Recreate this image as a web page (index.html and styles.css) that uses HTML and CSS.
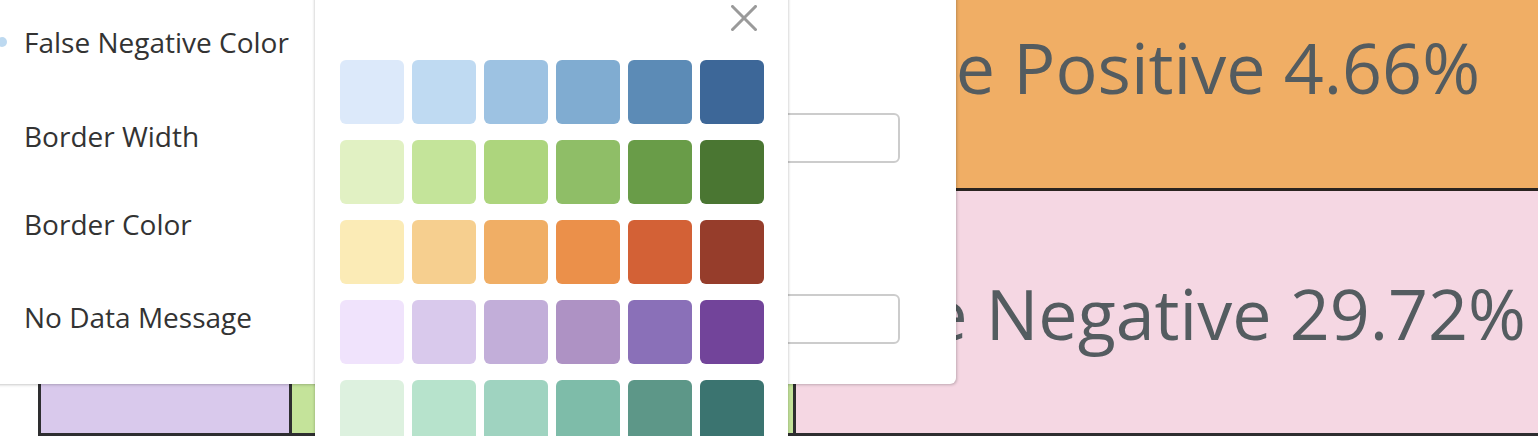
FILE: index.html
```html
<!DOCTYPE html>
<html lang="en">
<head>
<meta charset="utf-8">
<title>Chart settings</title>
<link rel="stylesheet" href="styles.css">
</head>
<body>
<div class="stage">
  <div class="chart">
    <div class="cell cell-purple"></div>
    <div class="cell cell-green"></div>
    <div class="cell cell-orange"><span class="cell-label">False Positive 4.66%</span></div>
    <div class="cell cell-pink"><span class="cell-label">False Negative 29.72%</span></div>
  </div>

  <div class="panel">
    <div class="row row-1">
      <span class="dot"></span>
      <span class="label">False Negative Color</span>
    </div>
    <div class="row row-2">
      <span class="label">Border Width</span>
      <input class="field" type="text">
    </div>
    <div class="row row-3">
      <span class="label">Border Color</span>
    </div>
    <div class="row row-4">
      <span class="label">No Data Message</span>
      <input class="field" type="text">
    </div>
  </div>

  <div class="picker">
    <div class="picker-head">
      <svg class="close" width="26" height="26" viewBox="0 0 26 26" aria-label="Close">
        <line x1="1.5" y1="1.5" x2="24.5" y2="24.5"/>
        <line x1="24.5" y1="1.5" x2="1.5" y2="24.5"/>
      </svg>
    </div>
    <div class="swatches">
      <span class="sw" style="background:#dce9fa"></span>
      <span class="sw" style="background:#bfdaf2"></span>
      <span class="sw" style="background:#9dc2e2"></span>
      <span class="sw" style="background:#80acd1"></span>
      <span class="sw" style="background:#5c8bb6"></span>
      <span class="sw" style="background:#3d6798"></span>

      <span class="sw" style="background:#e1f1c3"></span>
      <span class="sw" style="background:#c4e49a"></span>
      <span class="sw" style="background:#add57d"></span>
      <span class="sw" style="background:#8fbe67"></span>
      <span class="sw" style="background:#699c48"></span>
      <span class="sw" style="background:#4a7632"></span>

      <span class="sw" style="background:#fbebb6"></span>
      <span class="sw" style="background:#f6cf8f"></span>
      <span class="sw" style="background:#f0ae65"></span>
      <span class="sw" style="background:#eb904a"></span>
      <span class="sw" style="background:#d36136"></span>
      <span class="sw" style="background:#963d2b"></span>

      <span class="sw" style="background:#f0e3fc"></span>
      <span class="sw" style="background:#d9c9ec"></span>
      <span class="sw" style="background:#c2aed9"></span>
      <span class="sw" style="background:#ae92c4"></span>
      <span class="sw" style="background:#8a70b8"></span>
      <span class="sw" style="background:#72449a"></span>

      <span class="sw" style="background:#ddf1df"></span>
      <span class="sw" style="background:#b7e3cc"></span>
      <span class="sw" style="background:#9fd3c0"></span>
      <span class="sw" style="background:#7ebca9"></span>
      <span class="sw" style="background:#5d9788"></span>
      <span class="sw" style="background:#3b7470"></span>
    </div>
  </div>
</div>
</body>
</html>
```

FILE: styles.css
```css
* { box-sizing: border-box; }

html, body {
  margin: 0;
  padding: 0;
  background: #ffffff;
}

body {
  font-family: "Open Sans", "Noto Sans", sans-serif;
  overflow: hidden;
}

.stage {
  position: relative;
  width: 1538px;
  height: 436px;
  overflow: hidden;
}

/* ---------- treemap behind the panel ---------- */
.chart {
  position: absolute;
  inset: 0;
}

.cell {
  position: absolute;
  border: 3px solid #2e2e30;
  overflow: hidden;
}

.cell-purple {
  left: 38px;
  top: 190px;
  width: 254px;
  height: 246px;
  background: #d9c9ec;
}

.cell-green {
  left: 289px;
  top: 190px;
  width: 507px;
  height: 246px;
  background: #c4e39a;
}

.cell-orange {
  left: 793px;
  top: -3px;
  width: 748px;
  height: 194px;
  background: #f0ae65;
  border-bottom-color: #2a2420;
  display: flex;
  justify-content: flex-end;
  align-items: flex-start;
  padding: 32px 58px 0 0;
}

.cell-pink {
  left: 793px;
  top: 188px;
  width: 748px;
  height: 248px;
  background: #f5d7e3;
  border-top-color: #2a2420;
  display: flex;
  justify-content: flex-end;
  align-items: flex-start;
  padding: 87px 12px 0 0;
}

.cell-label {
  font-size: 70px;
  line-height: 70px;
  color: #545c60;
  white-space: nowrap;
}

/* ---------- settings panel ---------- */
.panel {
  position: absolute;
  left: -6px;
  top: -6px;
  width: 962px;
  height: 390px;
  background: #ffffff;
  border-radius: 0 0 6px 0;
  box-shadow: 1px 1px 3px rgba(0, 0, 0, 0.22);
  display: flex;
  flex-direction: column;
  padding: 23px 56px 0 30px;
}

.row {
  position: relative;
  height: 50px;
  display: flex;
  align-items: center;
  justify-content: space-between;
}

.row-2 { margin-top: 44px; }
.row-3 { margin-top: 38px; }
.row-4 { margin-top: 43px; }

.label {
  font-size: 28px;
  line-height: 50px;
  color: #333333;
  white-space: nowrap;
}

.dot {
  position: absolute;
  left: -27px;
  top: 20px;
  width: 10px;
  height: 10px;
  border-radius: 50%;
  background: #bdd9f0;
}

.field {
  width: 340px;
  height: 50px;
  margin-top: 3px;
  border: 2px solid #cccccc;
  border-radius: 6px;
  background: #ffffff;
  font: inherit;
}

/* ---------- colour picker popover ---------- */
.picker {
  position: absolute;
  left: 315px;
  top: -10px;
  width: 473px;
  height: 470px;
  background: #ffffff;
  box-shadow: 0 0 3px rgba(0, 0, 0, 0.28);
  display: flex;
  flex-direction: column;
  padding: 15px 31px 0 25px;
}

.picker-head {
  display: flex;
  justify-content: flex-end;
  height: 26px;
}

.close {
  stroke: #9a9a9a;
  stroke-width: 3;
  stroke-linecap: square;
}

.swatches {
  margin-top: 29px;
  display: grid;
  grid-template-columns: repeat(6, 64px);
  grid-auto-rows: 64px;
  column-gap: 8px;
  row-gap: 16px;
}

.sw {
  display: block;
  border-radius: 6px;
}
```
